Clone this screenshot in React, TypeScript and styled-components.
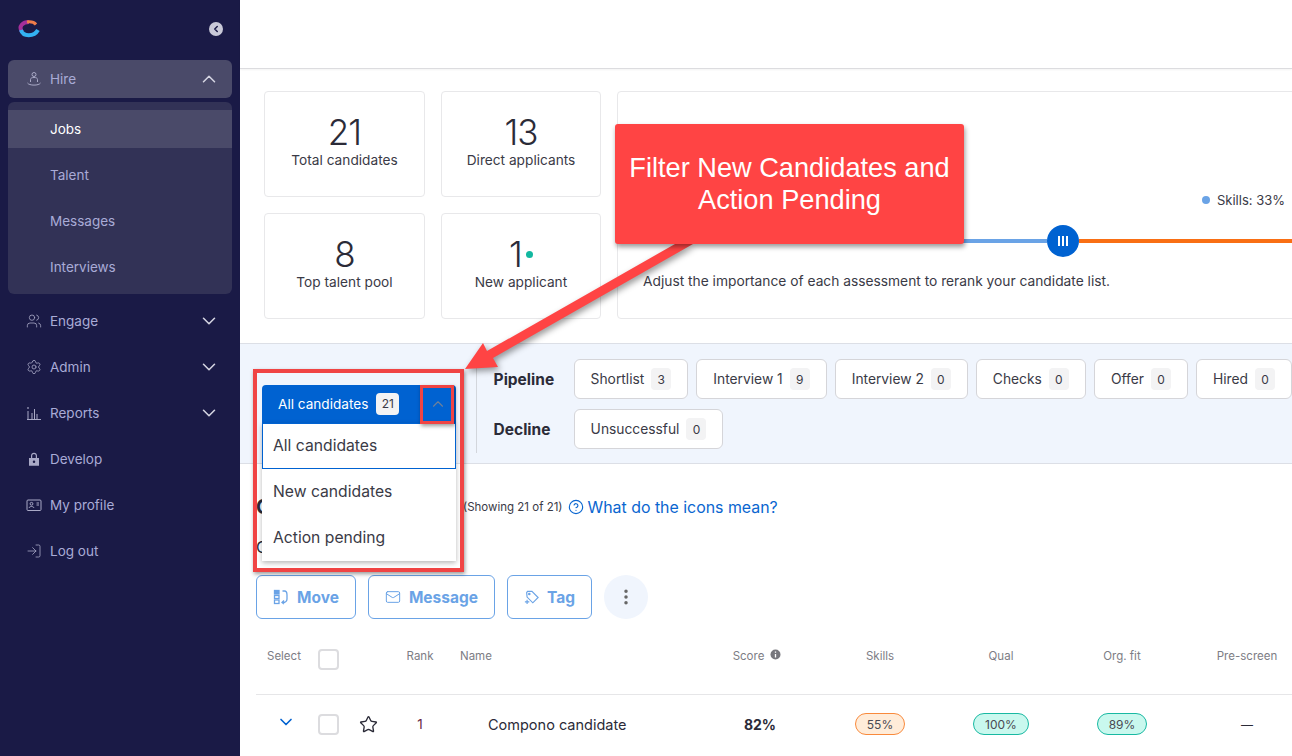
import React from 'react';
import styled, { createGlobalStyle } from 'styled-components';
import { ChevronDown, ChevronLeft, ChevronUp, CircleHelp, EllipsisVertical, LogIn, Mail, Settings, Star, Users } from 'lucide-react';

const GlobalStyle = createGlobalStyle`
  html, body {
    margin: 0;
    height: 100%;
    overflow: hidden;
    background: #fff;
    font-family: Inter, "Noto Sans", sans-serif;
    color: #2b2b38;
  }
  * { box-sizing: border-box; }
`;

const Page = styled.div`
  position: relative;
  display: flex;
  width: 100vw;
  height: 100vh;
  overflow: hidden;
`;

/* sidebar */
const Sidebar = styled.nav`
  width: 240px;
  flex-shrink: 0;
  background: #1a1a46;
  padding: 0 8px;
  display: flex;
  flex-direction: column;
  gap: 8px;
`;

const Brand = styled.div`
  height: 52px;
  display: flex;
  align-items: center;
  justify-content: space-between;
  padding: 6px 9px 0 10px;
`;

const CollapseButton = styled.span`
  width: 14px;
  height: 14px;
  border-radius: 50%;
  background: #c9c9d8;
  color: #1a1a46;
  display: flex;
  align-items: center;
  justify-content: center;
`;

const NavItem = styled.div<{ $open?: boolean }>`
  height: 38px;
  display: flex;
  align-items: center;
  padding: 0 12px 0 18px;
  border-radius: 6px;
  background: ${p => (p.$open ? '#4a4a69' : 'transparent')};
  color: #a9abd6;
  font-size: 13.5px;
`;

const NavIcon = styled.span`
  width: 16px;
  height: 16px;
  margin-right: 8px;
  display: flex;
  align-items: center;
  justify-content: center;
  color: #a9a9c6;
`;

const NavLabel = styled.span`
  flex: 1;
`;

const NavChevron = styled.span`
  display: flex;
  color: #d5d5e2;
`;

const SubPanel = styled.div`
  margin-top: -4px;
  background: #323256;
  border-radius: 6px;
  padding: 8px 0;
  display: flex;
  flex-direction: column;
  gap: 8px;
`;

const SubItem = styled.div<{ $active?: boolean }>`
  height: 38px;
  display: flex;
  align-items: center;
  padding-left: 42px;
  font-size: 13.5px;
  background: ${p => (p.$active ? '#4a4a69' : 'transparent')};
  color: ${p => (p.$active ? '#fff' : '#a9abd6')};
`;

/* main */
const Main = styled.main`
  flex: 1;
  min-width: 0;
  display: flex;
  flex-direction: column;
`;

const TopBar = styled.header`
  height: 69px;
  flex-shrink: 0;
  border-bottom: 1px solid #dcdcdf;
  box-shadow: 0 1px 2px rgba(0, 0, 0, 0.05);
`;

const Stats = styled.section`
  height: 274px;
  flex-shrink: 0;
  padding: 22px 0 0 24px;
  display: flex;
  gap: 16px;
`;

const StatGrid = styled.div`
  display: grid;
  grid-template-columns: 161px 160px;
  grid-template-rows: 106px 106px;
  gap: 16px;
`;

const StatCard = styled.div`
  border: 1px solid #e8e8ea;
  border-radius: 4px;
  padding-top: 21px;
  text-align: center;
`;

const StatNumber = styled.div`
  font-size: 35px;
  font-weight: 300;
  line-height: 38px;
  letter-spacing: -1px;
  color: #2b2b38;
`;

const NewDot = styled.span`
  display: inline-block;
  width: 7px;
  height: 7px;
  margin-left: 4px;
  border-radius: 50%;
  background: #12b8a0;
  vertical-align: 9px;
`;

const StatLabel = styled.div`
  font-size: 13.7px;
  line-height: 18px;
  color: #3a3a46;
`;

const WeightPanel = styled.div`
  width: 900px;
  height: 228px;
  flex-shrink: 0;
  border: 1px solid #e8e8ea;
  border-radius: 4px;
  padding: 0 25px 28px;
  display: flex;
  flex-direction: column;
  justify-content: flex-end;
`;

const Legend = styled.div`
  margin: 0 0 16px 559px;
  display: flex;
  align-items: center;
  gap: 7px;
  font-size: 13px;
  line-height: 18px;
  color: #3a3a46;
  white-space: nowrap;
`;

const LegendDot = styled.span`
  width: 8px;
  height: 8px;
  border-radius: 50%;
  background: #6aa3e6;
`;

const Track = styled.div`
  display: flex;
  align-items: center;
  height: 32px;
  margin-right: -25px;
`;

const TrackPart = styled.span<{ $colour: string; $grow?: boolean }>`
  height: 4px;
  background: ${p => p.$colour};
  ${p => (p.$grow ? 'flex: 1;' : 'width: 404px;')}
`;

const Thumb = styled.span`
  width: 32px;
  height: 32px;
  border-radius: 50%;
  background: #0062d1;
  display: flex;
  align-items: center;
  justify-content: center;
  gap: 2.5px;
  i {
    display: block;
    width: 1.5px;
    height: 10px;
    background: #fff;
  }
`;

const WeightHint = styled.p`
  margin: 15px 0 0;
  font-size: 13.77px;
  line-height: 18px;
  color: #3a3a46;
`;

/* filter band */
const FilterBand = styled.section`
  height: 121px;
  flex-shrink: 0;
  background: #f0f5fd;
  border-top: 1px solid #dcdfe6;
  border-bottom: 1px solid #dcdfe6;
  padding: 0 0 0 22px;
  display: flex;
  align-items: center;
`;

const Dropdown = styled.div`
  position: relative;
  width: 194px;
  flex-shrink: 0;
`;

const DropdownHead = styled.div`
  height: 38px;
  background: #0062d1;
  border-radius: 4px 4px 0 0;
  color: #fff;
  font-size: 13.6px;
  display: flex;
  align-items: center;
  padding-left: 16px;
`;

const HeadCount = styled.span`
  width: 23px;
  height: 22px;
  margin-left: 8px;
  border-radius: 4px;
  background: #f3f3f4;
  color: #3a3a46;
  font-size: 12px;
  display: flex;
  align-items: center;
  justify-content: center;
`;

const HeadChevron = styled.span`
  margin-left: auto;
  width: 36px;
  display: flex;
  justify-content: center;
  color: #6f8199;
`;

const Menu = styled.div`
  position: absolute;
  top: 100%;
  left: 0;
  right: 0;
  z-index: 5;
  background: #fff;
  box-shadow: 0 2px 5px rgba(0, 0, 0, 0.28);
`;

const MenuItem = styled.div<{ $active?: boolean }>`
  height: 46px;
  display: flex;
  align-items: center;
  padding-left: 10px;
  font-size: 15.7px;
  color: #3a3a46;
  border: 1px solid ${p => (p.$active ? '#0062d1' : 'transparent')};
`;

const Divider = styled.div`
  width: 1px;
  align-self: stretch;
  margin: 18px 16px 10px 20px;
  background: #d3d6dc;
`;

const StageRows = styled.div`
  display: grid;
  grid-template-columns: 81px 1fr;
  row-gap: 10px;
  align-items: center;
  align-self: flex-start;
  margin-top: 15px;
`;

const StageLabel = styled.div`
  font-size: 15.5px;
  font-weight: 700;
  padding-left: 1px;
  color: #2b2b38;
`;

const Chips = styled.div`
  display: flex;
  gap: 8px;
`;

const Chip = styled.div`
  height: 40px;
  padding: 0 16px;
  display: flex;
  align-items: center;
  gap: 7px;
  background: #fff;
  border: 1px solid #d5d5d9;
  border-radius: 6px;
  font-size: 13.8px;
  color: #3a3a46;
  white-space: nowrap;
`;

const ChipCount = styled.span`
  width: 20px;
  height: 22px;
  border-radius: 4px;
  background: #f3f3f4;
  font-size: 12px;
  display: flex;
  align-items: center;
  justify-content: center;
`;

/* list */
const ListSection = styled.section`
  flex: 1;
  padding: 32px 0 0 16px;
`;

const TitleRow = styled.div`
  display: flex;
  align-items: center;
  height: 22px;
`;

const ListTitle = styled.h2`
  width: 207px;
  margin: 0;
  font-size: 20px;
  font-weight: 700;
  white-space: nowrap;
`;

const Showing = styled.span`
  font-size: 11.5px;
  color: #3a3a46;
  white-space: nowrap;
`;

const HelpLink = styled.a`
  margin-left: 5px;
  display: flex;
  align-items: center;
  gap: 4px;
  font-size: 15.9px;
  color: #0a66d0;
`;

const SubTitle = styled.div`
  margin-top: 19px;
  height: 20px;
  font-size: 16px;
  line-height: 20px;
`;

const Actions = styled.div`
  margin-top: 18px;
  display: flex;
  gap: 12px;
`;

const ActionButton = styled.button`
  height: 44px;
  padding: 0 16px;
  display: flex;
  align-items: center;
  gap: 8px;
  background: #fff;
  border: 1px solid #6aa3e6;
  border-radius: 6px;
  color: #6aa3e6;
  font-family: inherit;
  font-size: 15.5px;
  font-weight: 700;
`;

const MoreButton = styled.button`
  width: 44px;
  height: 44px;
  border: 0;
  border-radius: 50%;
  background: #f0f5fd;
  color: #666;
  display: flex;
  align-items: center;
  justify-content: center;
`;

const columns = '62px 40px 40px 44px 270px 96px 144px 98px 144px 106px';

const HeadRow = styled.div`
  margin-top: 30px;
  height: 46px;
  display: grid;
  grid-template-columns: ${columns};
  border-bottom: 1px solid #e6e6e8;
  font-size: 11.5px;
  line-height: 14px;
  color: #7d7d85;
`;

const HeadCell = styled.div<{ $center?: boolean; $inset?: number }>`
  padding: 0 0 0 ${p => p.$inset ?? 0}px;
  ${p => (p.$center ? 'display: flex; justify-content: center;' : '')}
`;

const ScoreHead = styled(HeadCell)`
  padding-right: 6px;
  gap: 6px;
`;

const Check = styled.span`
  display: block;
  width: 21px;
  height: 21px;
  border: 2px solid #dcdcdf;
  border-radius: 4px;
  background: #fff;
`;

const Row = styled.div`
  height: 58px;
  display: grid;
  grid-template-columns: ${columns};
  align-items: center;
  font-size: 14.5px;
`;

const RowCell = styled.div<{ $center?: boolean; $inset?: number }>`
  padding-left: ${p => p.$inset ?? 0}px;
  display: flex;
  white-space: nowrap;
  ${p => (p.$center ? 'justify-content: center;' : '')}
`;

const ExpandCell = styled(RowCell)`
  padding-bottom: 4px;
  color: #0062d1;
`;

const TotalScore = styled.span`
  font-size: 14px;
  font-weight: 700;
`;

const RankNumber = styled.span`
  color: #6b2a45;
  font-size: 13.5px;
`;

const EmptyScore = styled.span`
  font-size: 12px;
`;

const Pill = styled.span<{ $warn?: boolean; $wide?: boolean }>`
  width: ${p => (p.$wide ? 56 : 50)}px;
  height: 22px;
  border-radius: 11px;
  font-size: 12px;
  display: flex;
  align-items: center;
  justify-content: center;
  color: #4a4a52;
  background: ${p => (p.$warn ? '#ffecd9' : '#c9f8ee')};
  border: 1px solid ${p => (p.$warn ? '#f98a3c' : '#18b9a2')};
`;

/* annotation drawn over the screenshot */
const ArrowLayer = styled.svg`
  position: absolute;
  inset: 0;
  z-index: 10;
  pointer-events: none;
  filter: drop-shadow(2px 3px 3px rgba(0, 0, 0, 0.4));
`;

const Callout = styled.div`
  position: absolute;
  left: 615px;
  top: 124px;
  width: 349px;
  height: 120px;
  z-index: 11;
  background: #ff4444;
  border-radius: 3px;
  box-shadow: 1px 3px 5px rgba(0, 0, 0, 0.4);
  color: #fff;
  font-family: "Liberation Sans", Arial, sans-serif;
  font-size: 27.2px;
  line-height: 32px;
  text-align: center;
  padding-top: 28px;
`;

const FilterFrame = styled.div`
  position: absolute;
  left: 253px;
  top: 369px;
  width: 211px;
  height: 203px;
  z-index: 9;
  border: 4px solid #f04444;
  box-shadow: 1px 2px 4px rgba(0, 0, 0, 0.4);
  pointer-events: none;
`;

const ChevronFrame = styled.div`
  position: absolute;
  left: 420px;
  top: 385px;
  width: 34px;
  height: 39px;
  z-index: 9;
  border: 3px solid #f04444;
  box-shadow: 1px 2px 4px rgba(0, 0, 0, 0.4);
  pointer-events: none;
`;

const Logo = () => (
  <svg width="22" height="18" viewBox="0 0 22 18" fill="none" strokeWidth="4">
    <path d="M4 12 C0 6 5 2 11 2" stroke="#a52f9a" />
    <path d="M9 2 C13 1.500 16 2 18 4.500" stroke="#ef7d4a" strokeWidth="3" />
    <path d="M3 10 C5 17 16 17 20 10" stroke="#33b2f2" />
  </svg>
);

const HireIcon = () => (
  <svg width="16" height="16" viewBox="0 0 16 16" fill="none" stroke="currentColor" strokeWidth="1">
    <circle cx="8" cy="3.500" r="2" />
    <path d="M4.500 11 V8.500 C4.500 7 6 6.500 8 6.500 S11.500 7 11.500 8.500 V11" />
    <path d="M1.500 12 C3 14.800 13 14.800 14.500 12" />
  </svg>
);

const ReportsIcon = () => (
  <svg width="16" height="16" viewBox="0 0 16 16" fill="none" stroke="currentColor" strokeWidth="1">
    <path d="M2 6 V14 M6 8 V14 M8.500 4 V14 M11 9 V14 M1 14.500 H15" />
    <circle cx="2" cy="3" r="0.500" />
  </svg>
);

const LockIcon = () => (
  <svg width="16" height="16" viewBox="0 0 16 16" fill="currentColor">
    <path d="M5 7 V4.800 C5 3 6.300 1.800 8 1.800 S11 3 11 4.800 V7 H9.800 V4.800 C9.800 3.800 9 3 8 3 S6.200 3.800 6.200 4.800 V7 Z" />
    <path fillRule="evenodd" d="M3 7 H13 V14.800 H3 Z M8 9.500 A1.200 1.200 0 1 0 8 12 A1.200 1.200 0 1 0 8 9.500 Z" />
  </svg>
);

const ProfileIcon = () => (
  <svg width="16" height="16" viewBox="0 0 16 16" fill="none" stroke="currentColor" strokeWidth="1">
    <rect x="1" y="3" width="14" height="10.500" rx="1" />
    <circle cx="5.500" cy="6.800" r="1.400" />
    <path d="M3 11 C3.500 9 7.500 9 8 11 M10.500 6 H13 M10.500 8 H13" />
  </svg>
);

const MoveIcon = () => (
  <svg width="16" height="16" viewBox="0 0 16 16" fill="none" stroke="currentColor" strokeWidth="1.300">
    <rect x="1.500" y="1.500" width="4.500" height="3.500" fill="currentColor" />
    <rect x="1.500" y="6.500" width="4.500" height="3" />
    <rect x="1.500" y="11" width="4.500" height="3.500" />
    <path d="M9.500 2 H11.500 C14 2 14 4 14 6 V10 C14 13 12.500 13.500 9.500 13.500 M11 11.500 L9 13.500 L11 15" />
  </svg>
);

const TagIcon = () => (
  <svg width="15" height="15" viewBox="0 0 17 17" fill="none" stroke="currentColor" strokeWidth="1.300">
    <path d="M3 3 L4 1.500 L9 1.500 L16 8.500 L10 14.500 L3.500 8 Z" />
    <circle cx="6" cy="4.500" r="0.800" />
    <path d="M3.500 11 V16 M1 13.500 H6" />
  </svg>
);

const InfoDot = () => (
  <svg width="11" height="11" viewBox="0 0 11 11">
    <circle cx="5.500" cy="5.500" r="5" fill="#77777d" />
    <path d="M5.500 2.500 V3.700 M5.500 5 V8.500" stroke="#fff" strokeWidth="1.300" />
  </svg>
);

const navBottom = [
  { label: 'Engage', icon: <Users size={16} strokeWidth={1.2} />, more: true },
  { label: 'Admin', icon: <Settings size={16} strokeWidth={1.2} />, more: true },
  { label: 'Reports', icon: <ReportsIcon />, more: true },
  { label: 'Develop', icon: <LockIcon /> },
  { label: 'My profile', icon: <ProfileIcon /> },
  { label: 'Log out', icon: <LogIn size={16} strokeWidth={1.2} /> },
];

const pipeline: [string, number][] = [
  ['Shortlist', 3],
  ['Interview 1', 9],
  ['Interview 2', 0],
  ['Checks', 0],
  ['Offer', 0],
  ['Hired', 0],
];

export default function App() {
  return (
    <Page>
      <GlobalStyle />
      <Sidebar>
        <Brand>
          <Logo />
          <CollapseButton><ChevronLeft size={10} strokeWidth={3.5} /></CollapseButton>
        </Brand>
        <NavItem $open>
          <NavIcon><HireIcon /></NavIcon>
          <NavLabel>Hire</NavLabel>
          <NavChevron><ChevronUp size={22} strokeWidth={1.7} /></NavChevron>
        </NavItem>
        <SubPanel>
          <SubItem $active>Jobs</SubItem>
          <SubItem>Talent</SubItem>
          <SubItem>Messages</SubItem>
          <SubItem>Interviews</SubItem>
        </SubPanel>
        {navBottom.map(item => (
          <NavItem key={item.label}>
            <NavIcon>{item.icon}</NavIcon>
            <NavLabel>{item.label}</NavLabel>
            {item.more && <NavChevron><ChevronDown size={22} strokeWidth={1.7} /></NavChevron>}
          </NavItem>
        ))}
      </Sidebar>

      <Main>
        <TopBar />
        <Stats>
          <StatGrid>
            <StatCard><StatNumber>21</StatNumber><StatLabel>Total candidates</StatLabel></StatCard>
            <StatCard><StatNumber>13</StatNumber><StatLabel>Direct applicants</StatLabel></StatCard>
            <StatCard><StatNumber>8</StatNumber><StatLabel>Top talent pool</StatLabel></StatCard>
            <StatCard><StatNumber>1<NewDot /></StatNumber><StatLabel>New applicant</StatLabel></StatCard>
          </StatGrid>
          <WeightPanel>
            <Legend><LegendDot />Skills: 33%</Legend>
            <Track>
              <TrackPart $colour="#6aa3e6" />
              <Thumb><i /><i /><i /></Thumb>
              <TrackPart $colour="#f96f14" $grow />
            </Track>
            <WeightHint>Adjust the importance of each assessment to rerank your candidate list.</WeightHint>
          </WeightPanel>
        </Stats>

        <FilterBand>
          <Dropdown>
            <DropdownHead>
              All candidates
              <HeadCount>21</HeadCount>
              <HeadChevron><ChevronUp size={18} strokeWidth={1.5} /></HeadChevron>
            </DropdownHead>
            <Menu>
              <MenuItem $active>All candidates</MenuItem>
              <MenuItem>New candidates</MenuItem>
              <MenuItem>Action pending</MenuItem>
            </Menu>
          </Dropdown>
          <Divider />
          <StageRows>
            <StageLabel>Pipeline</StageLabel>
            <Chips>
              {pipeline.map(([name, count]) => (
                <Chip key={name}>{name}<ChipCount>{count}</ChipCount></Chip>
              ))}
            </Chips>
            <StageLabel>Decline</StageLabel>
            <Chips>
              <Chip>Unsuccessful<ChipCount>0</ChipCount></Chip>
            </Chips>
          </StageRows>
        </FilterBand>

        <ListSection>
          <TitleRow>
            <ListTitle>Candidates</ListTitle>
            <Showing>(Showing 21 of 21)</Showing>
            <HelpLink><CircleHelp size={16} strokeWidth={1.7} />What do the icons mean?</HelpLink>
          </TitleRow>
          <SubTitle>Candidate actions</SubTitle>
          <Actions>
            <ActionButton><MoveIcon />Move</ActionButton>
            <ActionButton><Mail size={16} strokeWidth={1.5} />Message</ActionButton>
            <ActionButton><TagIcon />Tag</ActionButton>
            <MoreButton><EllipsisVertical size={20} strokeWidth={2.2} /></MoreButton>
          </Actions>
          <HeadRow>
            <HeadCell $inset={11}>Select</HeadCell>
            <HeadCell><Check /></HeadCell>
            <HeadCell />
            <HeadCell $center>Rank</HeadCell>
            <HeadCell $inset={18}>Name</HeadCell>
            <ScoreHead $center>Score <InfoDot /></ScoreHead>
            <HeadCell $center>Skills</HeadCell>
            <HeadCell $center>Qual</HeadCell>
            <HeadCell $center>Org. fit</HeadCell>
            <HeadCell $center>Pre-screen</HeadCell>
          </HeadRow>
          <Row>
            <ExpandCell $inset={20}><ChevronDown size={20} strokeWidth={2} /></ExpandCell>
            <RowCell><Check /></RowCell>
            <RowCell $inset={1}><Star size={19} strokeWidth={1.7} color="#2b2b38" /></RowCell>
            <RowCell $center><RankNumber>1</RankNumber></RowCell>
            <RowCell $inset={46}>Compono candidate</RowCell>
            <RowCell $center><TotalScore>82%</TotalScore></RowCell>
            <RowCell $center><Pill $warn>55%</Pill></RowCell>
            <RowCell $center><Pill $wide>100%</Pill></RowCell>
            <RowCell $center><Pill>89%</Pill></RowCell>
            <RowCell $center><EmptyScore>—</EmptyScore></RowCell>
          </Row>
        </ListSection>
      </Main>

      <FilterFrame />
      <ChevronFrame />
      <ArrowLayer width="1292" height="756" viewBox="0 0 1292 756">
        <polygon points="465,369 483,343 487,351 675,244 693,244 493,358 498,367" fill="#ff4444" />
      </ArrowLayer>
      <Callout>Filter New Candidates and<br />Action Pending</Callout>
    </Page>
  );
}
